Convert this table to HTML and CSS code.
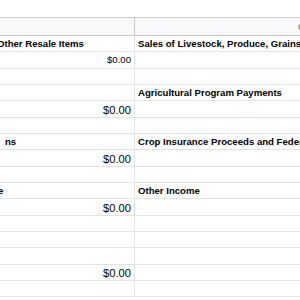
FILE: index.html
```html
<!DOCTYPE html>
<html>
<head>
<meta charset="utf-8">
<link rel="stylesheet" href="styles.css">
</head>
<body>
<div class="toolbar"></div>
<div class="sheet">
  <div class="row head">
    <div class="cell left"></div>
    <div class="cell right"><span class="colname">C</span></div>
  </div>
  <div class="row">
    <div class="cell left label l1">Other Resale Items</div>
    <div class="cell right label">Sales of Livestock, Produce, Grains, and Other Products</div>
  </div>
  <div class="row">
    <div class="cell left num small">$0.00</div>
    <div class="cell right"></div>
  </div>
  <div class="row"><div class="cell left"></div><div class="cell right"></div></div>
  <div class="row">
    <div class="cell left"></div>
    <div class="cell right label">Agricultural Program Payments</div>
  </div>
  <div class="row">
    <div class="cell left num">$0.00</div>
    <div class="cell right"></div>
  </div>
  <div class="row"><div class="cell left"></div><div class="cell right"></div></div>
  <div class="row">
    <div class="cell left label l3">ns</div>
    <div class="cell right label">Crop Insurance Proceeds and Federal Crop Disaster Payments</div>
  </div>
  <div class="row">
    <div class="cell left num">$0.00</div>
    <div class="cell right"></div>
  </div>
  <div class="row"><div class="cell left"></div><div class="cell right"></div></div>
  <div class="row">
    <div class="cell left label l4">e</div>
    <div class="cell right label">Other Income</div>
  </div>
  <div class="row">
    <div class="cell left num">$0.00</div>
    <div class="cell right"></div>
  </div>
  <div class="row"><div class="cell left"></div><div class="cell right"></div></div>
  <div class="row"><div class="cell left"></div><div class="cell right"></div></div>
  <div class="row"><div class="cell left"></div><div class="cell right"></div></div>
  <div class="row">
    <div class="cell left num">$0.00</div>
    <div class="cell right"></div>
  </div>
  <div class="row"><div class="cell left"></div><div class="cell right"></div></div>
</div>
</body>
</html>
```
FILE: styles.css
```css
html, body {
  margin: 0;
  padding: 0;
  background: #ffffff;
  overflow: hidden;
  width: 300px;
  height: 300px;
}
body {
  font-family: "Liberation Sans", Arial, sans-serif;
  color: #000;
}
.toolbar {
  height: 17px;
  background: #ffffff;
}
.sheet {
  margin-left: -156px;
  width: 600px;
}
.row {
  display: flex;
  height: 16.33px;
  box-sizing: border-box;
  border-bottom: 1px solid #e2e3e3;
}
.row.head {
  height: 19px;
  background: #f8f9fa;
  border-top: 1px solid #c7c7c7;
  border-bottom: 1px solid #c7c7c7;
}
.cell {
  box-sizing: border-box;
  height: 100%;
  display: flex;
  align-items: center;
  white-space: nowrap;
  overflow: visible;
  padding: 0 3px;
}
.cell.left {
  width: 291px;
  flex: none;
  border-right: 1px solid #e2e3e3;
}
.head .cell.left {
  border-right: 1px solid #c7c7c7;
}
.cell.right {
  flex: 1;
}
.colname {
  font-size: 9px;
  color: #555;
  margin-left: 160px;
}
.label {
  font-weight: bold;
  font-size: 9.6px;
}
.l1 { padding-left: 153px; }
.l3 { padding-left: 161px; }
.l4 { padding-left: 154px; }
.num {
  justify-content: flex-end;
  font-size: 11.2px;
  align-items: flex-end;
  padding-bottom: 1px;
}
.num.small {
  font-size: 9.6px;
  align-items: center;
  padding-bottom: 0;
}
```
